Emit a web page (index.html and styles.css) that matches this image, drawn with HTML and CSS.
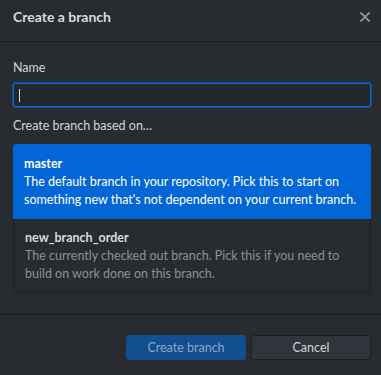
FILE: index.html
```html
<!DOCTYPE html>
<html>
<head>
<meta charset="utf-8">
<link rel="stylesheet" href="styles.css">
</head>
<body>
<div class="dialog">
  <header class="header">
    <h1 class="title">Create a branch</h1>
    <button class="close" aria-label="Close">
      <svg width="10" height="10" viewBox="0 0 10 10"><path d="M1 1L9 9M9 1L1 9" stroke="#8d9196" stroke-width="1.8" stroke-linecap="square"/></svg>
    </button>
  </header>
  <div class="content">
    <label class="label">Name</label>
    <div class="input"><span class="caret"></span></div>
    <div class="label label-based">Create branch based on…</div>
    <div class="list">
      <div class="item selected">
        <div class="item-title">master</div>
        <div class="item-desc">The default branch in your repository. Pick this to start on something new that's not dependent on your current branch.</div>
      </div>
      <div class="item">
        <div class="item-title">new_branch_order</div>
        <div class="item-desc">The currently checked out branch. Pick this if you need to build on work done on this branch.</div>
      </div>
    </div>
  </div>
  <footer class="footer">
    <button class="btn btn-primary">Create branch</button>
    <button class="btn btn-secondary">Cancel</button>
  </footer>
</div>
</body>
</html>
```

FILE: styles.css
```css
html, body {
  margin: 0;
  padding: 0;
  background: #282c31;
}
body {
  width: 381px;
  height: 375px;
  overflow: hidden;
  font-family: Lato, "Noto Sans", sans-serif;
  font-size: 12.5px;
  color: #d4d6d9;
}
.dialog {
  display: flex;
  flex-direction: column;
  height: 375px;
}
.header {
  flex: none;
  height: 41px;
  border-bottom: 1px solid #1b1e22;
  display: flex;
  align-items: center;
  justify-content: space-between;
  padding: 0 8px 0 13px;
  box-sizing: content-box;
}
.title {
  margin: 0;
  font-size: 14px;
  font-weight: 700;
  color: #d9dbdd;
  line-height: 18px;
  margin-top: -8px;
}
.close {
  background: none;
  border: 0;
  padding: 0;
  width: 16px;
  height: 16px;
  display: flex;
  align-items: center;
  justify-content: center;
  margin-top: -8px;
}
.content {
  padding: 18px 10px 0 13px;
  display: flex;
  flex-direction: column;
}
.label {
  display: block;
  line-height: 16px;
  color: #d2d4d7;
}
.input {
  margin-top: 7px;
  height: 24px;
  box-sizing: border-box;
  border: 1px solid #0b6ad8;
  box-shadow: 0 0 0 1px rgba(11, 106, 216, 0.55);
  border-radius: 3px;
  background: #23272b;
  display: flex;
  align-items: center;
  padding-left: 5px;
}
.caret {
  width: 1px;
  height: 13px;
  background: #d8dadc;
}
.label-based {
  margin-top: 11px;
}
.list {
  margin-top: 10px;
  display: flex;
  flex-direction: column;
}
.item {
  padding: 10px 11px 9px;
  line-height: 18px;
  border: 1px solid #1d2125;
  border-top: 0;
  border-radius: 0 0 3px 3px;
  color: #8b9096;
}
.item.selected {
  background: #0366d6;
  border: 0;
  border-radius: 3px 3px 0 0;
  padding: 11px 11px 10px;
  color: #ffffff;
}
.item-title {
  font-weight: 700;
  color: #d8dadd;
}
.selected .item-title {
  color: #ffffff;
}
.footer {
  flex: none;
  margin-top: 21px;
  border-top: 1px solid #1b1e22;
  padding: 20px 10px 0 0;
  display: flex;
  justify-content: flex-end;
  gap: 5px;
}
.btn {
  width: 120px;
  height: 25px;
  box-sizing: border-box;
  border-radius: 3px;
  font-family: inherit;
  font-size: 12.5px;
  padding: 0;
}
.btn-primary {
  background: #114f90;
  border: 1px solid #114f90;
  color: #8ea6c2;
}
.btn-secondary {
  background: #30353b;
  border: 1px solid #1b1e22;
  color: #d2d4d7;
}
```
